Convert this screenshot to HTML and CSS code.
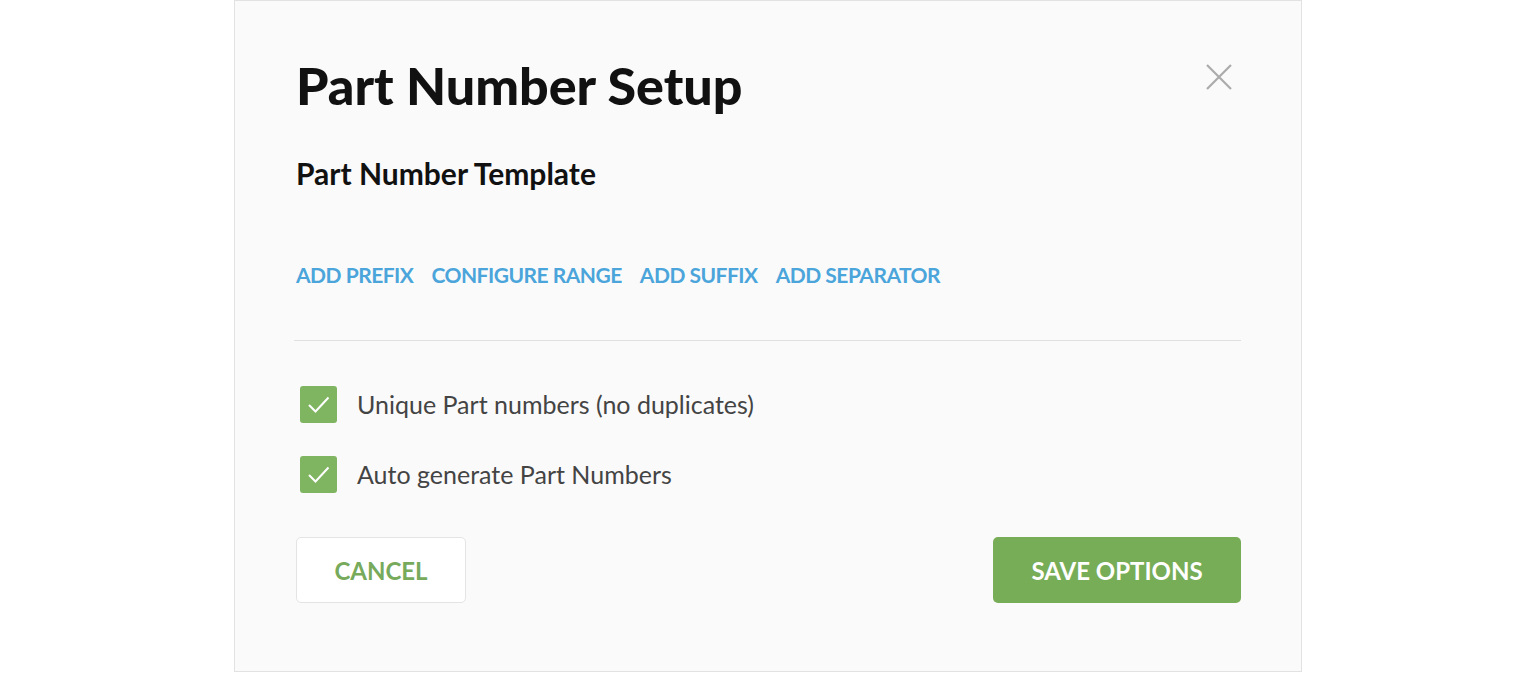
FILE: index.html
```html
<!DOCTYPE html>
<html lang="en">
<head>
    <meta charset="UTF-8">
    <meta name="viewport" content="width=device-width, initial-scale=1.0">
    <title>Part Number Setup</title>
    <link rel="stylesheet" href="styles.css">
</head>
<body>
    <div class="modal">
        <div class="modal-header">
            <h1>Part Number Setup</h1>
            <button class="close-btn" aria-label="Close">
                <svg width="26" height="26" viewBox="0 0 26 26">
                    <path d="M1 1 L25 25 M25 1 L1 25" stroke="#ababab" stroke-width="2.2" fill="none"/>
                </svg>
            </button>
        </div>

        <h2>Part Number Template</h2>

        <div class="template-actions">
            <a href="#">ADD PREFIX</a>
            <a href="#">CONFIGURE RANGE</a>
            <a href="#">ADD SUFFIX</a>
            <a href="#">ADD SEPARATOR</a>
        </div>

        <hr class="divider">

        <label class="check-row">
            <span class="check-box">
                <svg width="37" height="37" viewBox="0 0 37 37">
                    <path d="M9 19 L15.5 25.5 L28.5 11.5" stroke="#fff" stroke-width="2" fill="none"/>
                </svg>
            </span>
            Unique Part numbers (no duplicates)
        </label>

        <label class="check-row second">
            <span class="check-box">
                <svg width="37" height="37" viewBox="0 0 37 37">
                    <path d="M9 19 L15.5 25.5 L28.5 11.5" stroke="#fff" stroke-width="2" fill="none"/>
                </svg>
            </span>
            Auto generate Part Numbers
        </label>

        <div class="modal-footer">
            <button class="btn btn-cancel">CANCEL</button>
            <button class="btn btn-save">SAVE OPTIONS</button>
        </div>
    </div>
</body>
</html>
```

FILE: styles.css
```css
* {
    margin: 0;
    padding: 0;
    box-sizing: border-box;
    font-family: Lato, "Liberation Sans", sans-serif;
}

body {
    background-color: #ffffff;
}

.modal {
    width: 1068px;
    height: 672px;
    margin: 0 auto;
    padding: 53px 60px 0 61px;
    background-color: #fafafa;
    border: 1px solid #e2e2e2;
}

.modal-header {
    display: flex;
    justify-content: space-between;
    align-items: flex-start;
}

h1 {
    font-size: 52px;
    line-height: 62px;
    font-weight: 900;
    color: #111;
}

.close-btn {
    margin-top: 10px;
    margin-right: 9px;
    background: none;
    border: none;
    cursor: pointer;
    line-height: 0;
}

h2 {
    margin-top: 39px;
    font-size: 30px;
    line-height: 36px;
    font-weight: bold;
    color: #111;
}

.template-actions {
    display: flex;
    gap: 18px;
    margin-top: 71px;
}

.template-actions a {
    font-size: 21px;
    line-height: 26px;
    font-weight: bold;
    letter-spacing: -0.5px;
    color: #4ba5db;
    text-decoration: none;
}

.divider {
    margin: 52px 0 0 -2px;
    border: none;
    border-top: 1px solid #e2dfe3;
}

.check-row {
    display: flex;
    align-items: center;
    gap: 20px;
    margin-top: 45px;
    margin-left: 4px;
    font-size: 25px;
    line-height: 37px;
    color: #444;
}

.check-row.second {
    margin-top: 33px;
}

.check-box {
    width: 37px;
    height: 37px;
    border-radius: 3px;
    background-color: #7fb461;
    line-height: 0;
}

.modal-footer {
    display: flex;
    justify-content: space-between;
    margin-top: 44px;
}

.btn {
    height: 66px;
    border-radius: 5px;
    font-size: 24px;
    font-weight: bold;
    cursor: pointer;
}

.btn-cancel {
    width: 170px;
    background-color: #fff;
    border: 1px solid #e4e4e4;
    color: #77aa5b;
}

.btn-save {
    width: 248px;
    background-color: #78ad58;
    border: none;
    color: #fff;
}
```
